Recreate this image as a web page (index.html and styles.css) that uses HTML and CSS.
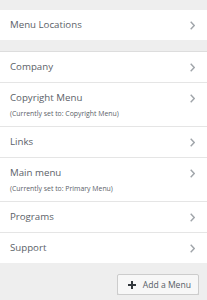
FILE: index.html
```html
<!DOCTYPE html>
<html lang="en">
<head>
    <meta charset="UTF-8">
    <meta name="viewport" content="width=device-width, initial-scale=1.0">
    <title>Menus</title>
    <link rel="stylesheet" href="styles.css">
</head>
<body>

    <div class="panel">
        <ul class="section locations">
            <li class="item">
                <div class="item-text">
                    <span class="item-title">Menu Locations</span>
                </div>
                <svg class="chevron" width="5" height="9" viewBox="0 0 5 9"><path d="M0.7 0.7 L4.2 4.5 L0.7 8.3" fill="none" stroke="#a0a5aa" stroke-width="1.4"/></svg>
            </li>
        </ul>

        <ul class="section menus">
            <li class="item">
                <div class="item-text">
                    <span class="item-title">Company</span>
                </div>
                <svg class="chevron" width="5" height="9" viewBox="0 0 5 9"><path d="M0.7 0.7 L4.2 4.5 L0.7 8.3" fill="none" stroke="#a0a5aa" stroke-width="1.4"/></svg>
            </li>
            <li class="item">
                <div class="item-text">
                    <span class="item-title">Copyright Menu</span>
                    <span class="item-note">(Currently set to: Copyright Menu)</span>
                </div>
                <svg class="chevron" width="5" height="9" viewBox="0 0 5 9"><path d="M0.7 0.7 L4.2 4.5 L0.7 8.3" fill="none" stroke="#a0a5aa" stroke-width="1.4"/></svg>
            </li>
            <li class="item">
                <div class="item-text">
                    <span class="item-title">Links</span>
                </div>
                <svg class="chevron" width="5" height="9" viewBox="0 0 5 9"><path d="M0.7 0.7 L4.2 4.5 L0.7 8.3" fill="none" stroke="#a0a5aa" stroke-width="1.4"/></svg>
            </li>
            <li class="item">
                <div class="item-text">
                    <span class="item-title">Main menu</span>
                    <span class="item-note">(Currently set to: Primary Menu)</span>
                </div>
                <svg class="chevron" width="5" height="9" viewBox="0 0 5 9"><path d="M0.7 0.7 L4.2 4.5 L0.7 8.3" fill="none" stroke="#a0a5aa" stroke-width="1.4"/></svg>
            </li>
            <li class="item">
                <div class="item-text">
                    <span class="item-title">Programs</span>
                </div>
                <svg class="chevron" width="5" height="9" viewBox="0 0 5 9"><path d="M0.7 0.7 L4.2 4.5 L0.7 8.3" fill="none" stroke="#a0a5aa" stroke-width="1.4"/></svg>
            </li>
            <li class="item">
                <div class="item-text">
                    <span class="item-title">Support</span>
                </div>
                <svg class="chevron" width="5" height="9" viewBox="0 0 5 9"><path d="M0.7 0.7 L4.2 4.5 L0.7 8.3" fill="none" stroke="#a0a5aa" stroke-width="1.4"/></svg>
            </li>
        </ul>

        <div class="actions">
            <button class="add-menu">
                <svg class="plus" width="8" height="8" viewBox="0 0 8 8"><path d="M4 0 V8 M0 4 H8" stroke="#32373c" stroke-width="2"/></svg>
                Add a Menu
            </button>
        </div>
    </div>

</body>
</html>
```

FILE: styles.css
```css
body {
    margin: 0;
    background-color: #eeeeee;
    color: #5b6168;
    font-family: 'Open Sans', 'Noto Sans', sans-serif;
}
.panel {
    padding-top: 10px;
}
.section {
    list-style: none;
    margin: 0;
    padding: 0;
    background-color: #fff;
}
.menus {
    margin-top: 11px;
    border-top: 1px solid #dddddd;
}
.item {
    display: flex;
    align-items: flex-start;
    justify-content: space-between;
    padding: 8px 12px 8px 10px;
}
.menus .item {
    border-bottom: 1px solid #e5e5e5;
}
.menus .item:last-child {
    border-bottom: none;
}
.item-text {
    display: flex;
    flex-direction: column;
}
.item-title {
    font-size: 9.7px;
    line-height: 14px;
}
.item-note {
    font-size: 6.9px;
    line-height: 10px;
    margin-top: 4px;
    margin-bottom: -1px;
}
.chevron {
    margin-top: 3px;
}
.actions {
    display: flex;
    justify-content: flex-end;
    padding: 11px 8px 0 0;
}
.add-menu {
    display: flex;
    align-items: center;
    gap: 7px;
    height: 21px;
    padding: 0 7px 0 10px;
    background-color: #f7f7f7;
    border: 1px solid #cccccc;
    border-radius: 2px;
    color: #555d66;
    font-family: 'Open Sans', 'Noto Sans', sans-serif;
    font-size: 8.6px;
    box-shadow: 0 1px 0 #cccccc;
}
```
